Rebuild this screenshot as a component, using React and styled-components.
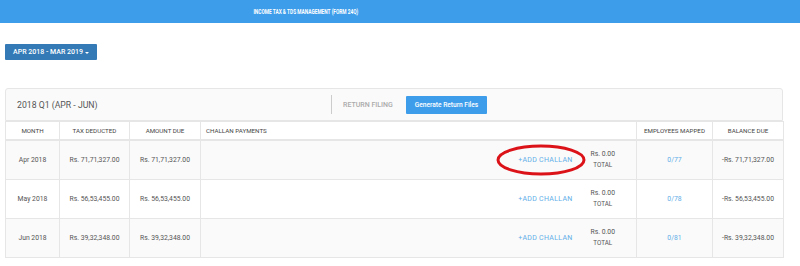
import styled, { createGlobalStyle } from "styled-components";

const GlobalStyle = createGlobalStyle`
    body {
        margin: 0;
        background: #fff;
        font-family: Roboto, "Liberation Sans", sans-serif;
    }
`;

const rows = [
    { month: "Apr 2018", tax: "Rs. 71,71,327.00", mapped: "0/77", balance: "-Rs. 71,71,327.00", marked: true },
    { month: "May 2018", tax: "Rs. 56,53,455.00", mapped: "0/78", balance: "-Rs. 56,53,455.00" },
    { month: "Jun 2018", tax: "Rs. 39,32,348.00", mapped: "0/81", balance: "-Rs. 39,32,348.00" },
];

function App() {
    return (
        <>
            <GlobalStyle />
            <TopBar>
                <Title>INCOME TAX &amp; TDS MANAGEMENT (FORM 24Q)</Title>
            </TopBar>
            <Page>
                <YearButton>APR 2018 - MAR 2019 <Caret /></YearButton>
                <Panel>
                    <PanelHead>
                        <Quarter>2018 Q1 (APR - JUN)</Quarter>
                        <Divider />
                        <Filing>RETURN FILING</Filing>
                        <GenerateButton>Generate Return Files</GenerateButton>
                    </PanelHead>
                    <Table>
                        <colgroup>
                            <col style={{ width: 54 }} />
                            <col style={{ width: 70 }} />
                            <col style={{ width: 71 }} />
                            <col style={{ width: 436 }} />
                            <col style={{ width: 76 }} />
                            <col style={{ width: 71 }} />
                        </colgroup>
                        <thead>
                            <tr>
                                <Th>MONTH</Th>
                                <Th>TAX DEDUCTED</Th>
                                <Th>AMOUNT DUE</Th>
                                <Th $left>CHALLAN PAYMENTS</Th>
                                <Th>EMPLOYEES MAPPED</Th>
                                <Th>BALANCE DUE</Th>
                            </tr>
                        </thead>
                        <tbody>
                            {rows.map((r) => (
                                <Row key={r.month}>
                                    <Td>{r.month}</Td>
                                    <Td>{r.tax}</Td>
                                    <Td>{r.tax}</Td>
                                    <Td>
                                        <Challan>
                                            <AddLink>
                                                +ADD CHALLAN
                                                {r.marked && (
                                                    <Mark viewBox="0 0 90 32">
                                                        <ellipse cx="45" cy="16" rx="43" ry="14" fill="none" stroke="#dc1219" strokeWidth="3" />
                                                    </Mark>
                                                )}
                                            </AddLink>
                                            <Total>
                                                <span>Rs. 0.00</span>
                                                <small>TOTAL</small>
                                            </Total>
                                        </Challan>
                                    </Td>
                                    <Td $blue>{r.mapped}</Td>
                                    <Td>{r.balance}</Td>
                                </Row>
                            ))}
                        </tbody>
                    </Table>
                </Panel>
            </Page>
        </>
    );
}

const TopBar = styled.div`
    height: 23px;
    background: #3d9deb;
    display: flex;
    align-items: center;
    justify-content: center;
    padding-right: 188px;
    box-sizing: border-box;
`;

const Title = styled.span`
    color: #fff;
    font-size: 7.5px;
    font-weight: 700;
    white-space: nowrap;
    transform: scaleX(0.64);
`;

const Page = styled.div`
    padding: 21px 17px 0 5px;
`;

const YearButton = styled.button`
    height: 16px;
    width: 92px;
    padding: 0;
    border: none;
    border-radius: 1px;
    background: #337ab7;
    color: #fff;
    font-family: Roboto, sans-serif;
    font-size: 7px;
    font-weight: 500;
    display: flex;
    align-items: center;
    justify-content: center;
    gap: 2px;
`;

const Caret = styled.span`
    width: 0;
    height: 0;
    border-left: 2px solid transparent;
    border-right: 2px solid transparent;
    border-top: 2px solid #fff;
    margin-top: 1px;
`;

const Panel = styled.div`
    margin-top: 28px;
    width: 778px;
`;

const PanelHead = styled.div`
    height: 31px;
    background: #fafafa;
    border: 1px solid #e6e6e6;
    border-radius: 3px 3px 0 0;
    display: flex;
    align-items: center;
    padding-left: 11px;
`;

const Quarter = styled.div`
    font-size: 8.7px;
    color: #555;
    width: 314px;
`;

const Divider = styled.div`
    width: 1px;
    height: 19px;
    background: #ccc;
`;

const Filing = styled.div`
    margin-left: 11px;
    font-size: 7px;
    font-weight: 500;
    color: #aaa;
    width: 63px;
`;

const GenerateButton = styled.button`
    height: 18px;
    width: 81px;
    border: none;
    border-radius: 1px;
    background: #3d9deb;
    color: #fff;
    font-family: Roboto, sans-serif;
    font-size: 6.6px;
    font-weight: 500;
    padding: 0;
`;

const Table = styled.table`
    width: 778px;
    table-layout: fixed;
    border-collapse: collapse;
    font-size: 6.8px;
    color: #555;
`;

const Th = styled.th`
    height: 17px;
    padding: 0 0 0 ${(p) => (p.$left ? "5px" : "0")};
    font-weight: 400;
    font-size: 6.2px;
    color: #444;
    text-align: ${(p) => (p.$left ? "left" : "center")};
    border: 1px solid #e6e6e6;
    border-bottom-width: 2px;
    background: #fff;
`;

const Row = styled.tr`
    height: 39px;
    &:nth-child(odd) {
        background: #fafafa;
    }
`;

const Td = styled.td`
    padding: 0;
    text-align: center;
    border: 1px solid #e6e6e6;
    color: ${(p) => (p.$blue ? "#62aee8" : "#555")};
`;

const Challan = styled.div`
    display: flex;
    justify-content: flex-end;
    align-items: center;
    gap: 18px;
    padding-right: 21px;
`;

const AddLink = styled.span`
    position: relative;
    color: #62aee8;
    font-size: 7px;
    letter-spacing: 0.3px;
`;

const Mark = styled.svg`
    position: absolute;
    left: 50%;
    top: 50%;
    width: 90px;
    height: 32px;
    margin-left: -49.5px;
    margin-top: -16px;
    overflow: visible;
`;

const Total = styled.div`
    display: flex;
    flex-direction: column;
    align-items: center;
    gap: 3px;
    margin-top: -1px;
    small {
        font-size: 6.3px;
        color: #555;
    }
`;

export default App;
